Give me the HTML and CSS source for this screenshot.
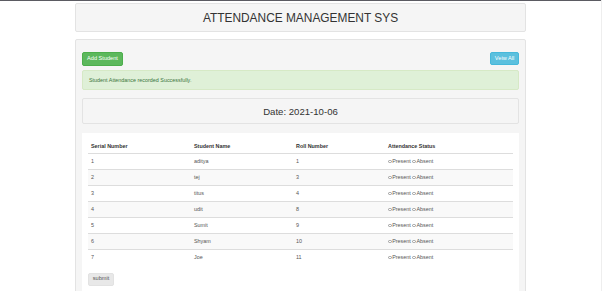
FILE: index.html
```html
<!DOCTYPE html>
<html>
<head>
<meta charset="utf-8">
<title>Attendance Management</title>
<link rel="stylesheet" href="styles.css">
</head>
<body>
<div class="topline"></div>
<div class="container">
  <div class="well header-well">
    <h1 class="title">ATTENDANCE MANAGEMENT SYS</h1>
  </div>
  <div class="well main-well">
    <div class="btn-row">
      <button class="btn btn-success">Add Student</button>
      <button class="btn btn-info">Veiw All</button>
    </div>
    <div class="alert">Student Attendance recorded Successfully.</div>
    <div class="well date-well">
      <h3 class="date">Date: 2021-10-06</h3>
    </div>
    <div class="panel">
      <table class="table">
        <thead>
          <tr><th class="c1">Serial Number</th><th class="c2">Student Name</th><th class="c3">Roll Number</th><th class="c4">Attendance Status</th></tr>
        </thead>
        <tbody>
          <tr><td>1</td><td>aditya</td><td>1</td><td><input type="radio" name="s1">Present <input type="radio" name="s1">Absent</td></tr>
          <tr><td>2</td><td>tej</td><td>3</td><td><input type="radio" name="s2">Present <input type="radio" name="s2">Absent</td></tr>
          <tr><td>3</td><td>titus</td><td>4</td><td><input type="radio" name="s3">Present <input type="radio" name="s3">Absent</td></tr>
          <tr><td>4</td><td>udit</td><td>8</td><td><input type="radio" name="s4">Present <input type="radio" name="s4">Absent</td></tr>
          <tr><td>5</td><td>Sumit</td><td>9</td><td><input type="radio" name="s5">Present <input type="radio" name="s5">Absent</td></tr>
          <tr><td>6</td><td>Shyam</td><td>10</td><td><input type="radio" name="s6">Present <input type="radio" name="s6">Absent</td></tr>
          <tr><td>7</td><td>Joe</td><td>11</td><td><input type="radio" name="s7">Present <input type="radio" name="s7">Absent</td></tr>
        </tbody>
      </table>
      <button class="btn btn-default">submit</button>
    </div>
  </div>
</div>
</body>
</html>
```
FILE: styles.css
```css
html, body {
  margin: 0;
  padding: 0;
  background: #fff;
  font-family: "Liberation Sans", Arial, sans-serif;
  color: #333;
}
body {
  border-right: 1px solid #eeeeee;
  min-height: 291px;
  box-sizing: border-box;
}
.topline {
  height: 1px;
  background: #5b5b62;
}
.container {
  width: 451px;
  margin: 0 auto;
  padding-top: 2px;
}
.well {
  background: #f5f5f5;
  border: 1px solid #e3e3e3;
  border-radius: 2px;
  box-sizing: border-box;
}
.header-well {
  height: 29px;
  display: flex;
  align-items: center;
  justify-content: center;
}
.title {
  margin: 0;
  font-size: 11.9px;
  font-weight: normal;
  color: #333;
}
.main-well {
  margin-top: 7px;
  padding: 12px 6px 0 6px;
  height: 260px;
}
.btn-row {
  display: flex;
  justify-content: space-between;
  align-items: flex-start;
}
.btn {
  font-family: "Liberation Sans", Arial, sans-serif;
  font-size: 5.6px;
  border-radius: 2px;
  border: 0.5px solid transparent;
  padding: 0;
  line-height: 1;
  cursor: pointer;
}
.btn-success {
  background: #5cb85c;
  border-color: #4cae4c;
  color: #fff;
  width: 41px;
  height: 14px;
}
.btn-info {
  background: #5bc0de;
  border-color: #46b8da;
  color: #fff;
  width: 29px;
  height: 13px;
}
.alert {
  margin-top: 4px;
  height: 20px;
  background: #dff0d8;
  border: 0.5px solid #d6e9c6;
  border-radius: 2px;
  color: #3c763d;
  font-size: 5.4px;
  display: flex;
  align-items: center;
  padding-left: 6px;
  box-sizing: border-box;
}
.date-well {
  margin-top: 8px;
  height: 26px;
  display: flex;
  align-items: center;
  justify-content: center;
}
.date {
  margin: 0;
  font-size: 9.6px;
  font-weight: normal;
  color: #333;
}
.panel {
  margin-top: 9px;
  background: #fff;
  padding: 6px 6px 0 6px;
  height: 160px;
  box-sizing: border-box;
}
.table {
  width: 425px;
  border-collapse: collapse;
  font-size: 5.4px;
  color: #333;
}
.table th, .table td {
  text-align: left;
  padding: 0 0 0 3px;
  vertical-align: middle;
}
.table th {
  height: 13.5px;
  font-weight: bold;
  border-bottom: 1.5px solid #dddddd;
}
.table td {
  height: 15px;
  border-top: 0.6px solid #dddddd;
  color: #555;
}
.table tbody tr:nth-child(even) td {
  background: #f9f9f9;
}
.c1 { width: 100px; }
.c2 { width: 99px; }
.c3 { width: 89px; }
.c4 { width: auto; }
.table input[type="radio"] {
  -webkit-appearance: none;
  appearance: none;
  width: 3.8px;
  height: 3.8px;
  margin: 0 0.4px 0 0;
  border: 0.4px solid #9a9a9a;
  border-radius: 50%;
  background: #fff;
  vertical-align: -0.3px;
  box-sizing: border-box;
}
.btn-default {
  margin-top: 8px;
  width: 26px;
  height: 13px;
  background: #e8e8e8;
  border-color: #e2e2e2;
  color: #555;
}
```
